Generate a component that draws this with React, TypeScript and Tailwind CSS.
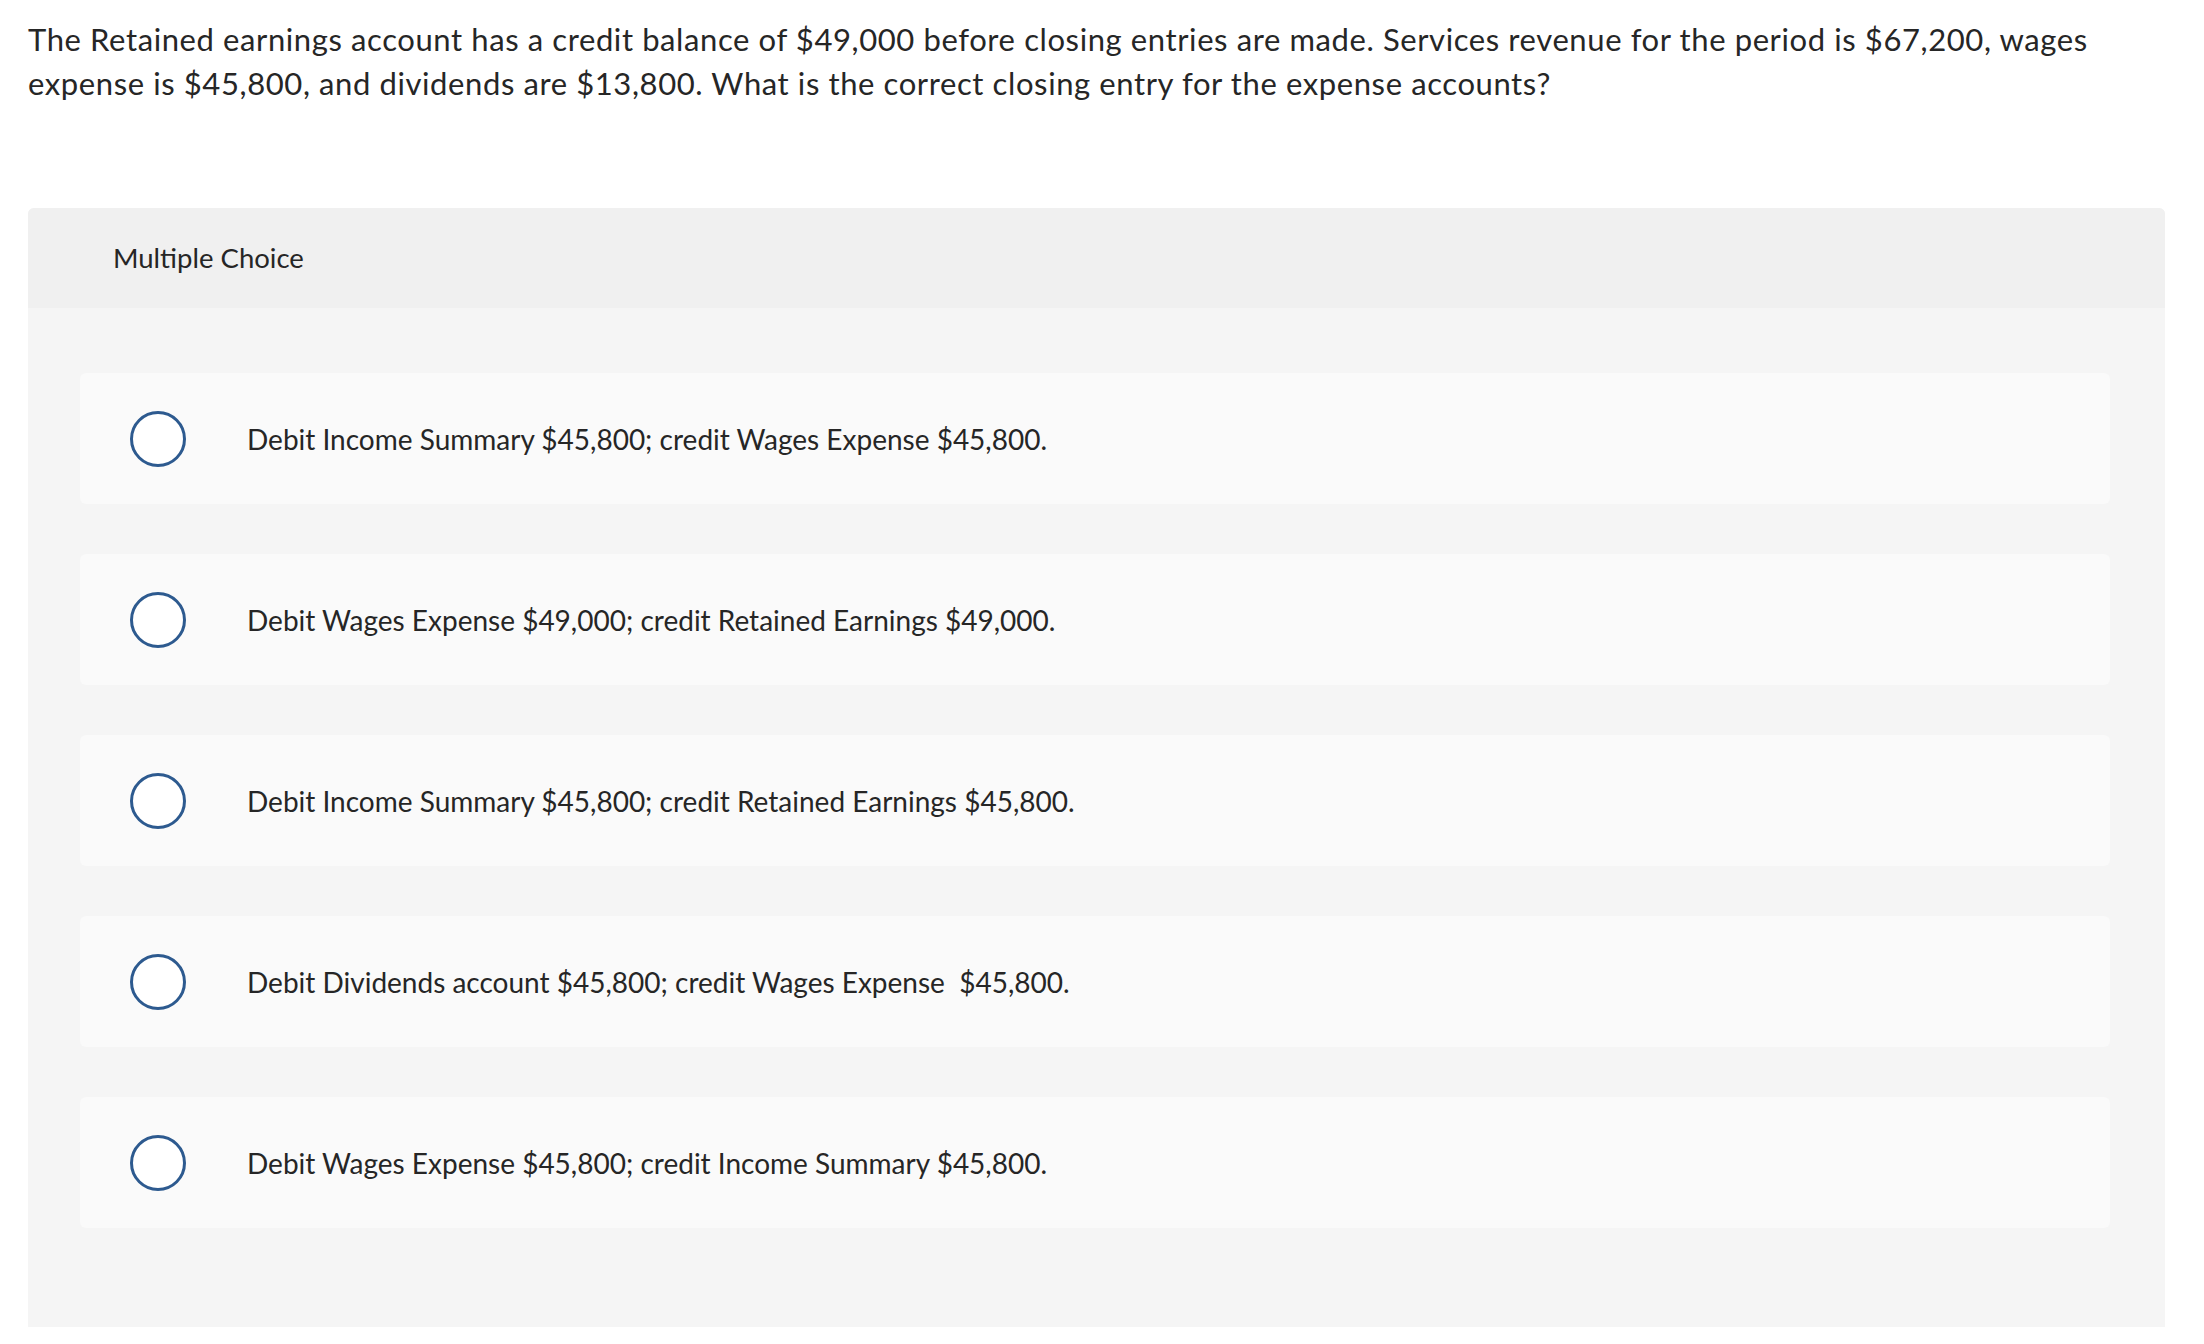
const options = [
  'Debit Income Summary $45,800; credit Wages Expense $45,800.',
  'Debit Wages Expense $49,000; credit Retained Earnings $49,000.',
  'Debit Income Summary $45,800; credit Retained Earnings $45,800.',
  'Debit Dividends account $45,800; credit Wages Expense\u00a0 $45,800.',
  'Debit Wages Expense $45,800; credit Income Summary $45,800.',
]

export default function App() {
  return (
    <div
      className="min-h-screen bg-white text-[#262626] pl-[28px] pr-[39px] pt-[17px]"
      style={{ fontFamily: '"Lato", "Liberation Sans", sans-serif' }}
    >
      {/* Question */}
      <p className="text-[31px] leading-[44px] tracking-[0.6px]">
        The Retained earnings account has a credit balance of $49,000 before closing entries are made. Services revenue
        for the period is $67,200, wages expense is $45,800, and dividends are $13,800. What is the correct closing entry
        for the expense accounts?
      </p>

      {/* Answer panel */}
      <div className="mt-[103px] rounded-t-[6px] bg-[#f5f5f5] overflow-hidden">
        <div className="h-[100px] bg-[#f0f0f0] flex items-center pl-[85px]">
          <span className="text-[27.5px]">Multiple Choice</span>
        </div>

        <div className="pl-[52px] pr-[55px] pt-[65px] pb-[99px] flex flex-col gap-[50px]">
          {options.map((text) => (
            <label
              key={text}
              className="h-[131px] bg-[#fafafa] rounded-[6px] flex items-center cursor-pointer"
            >
              <span className="ml-[50px] w-[56px] h-[56px] rounded-full border-[3px] border-[#2d5a8f] bg-white shrink-0" />
              <span className="ml-[61px] text-[28px]">{text}</span>
            </label>
          ))}
        </div>
      </div>
    </div>
  )
}
